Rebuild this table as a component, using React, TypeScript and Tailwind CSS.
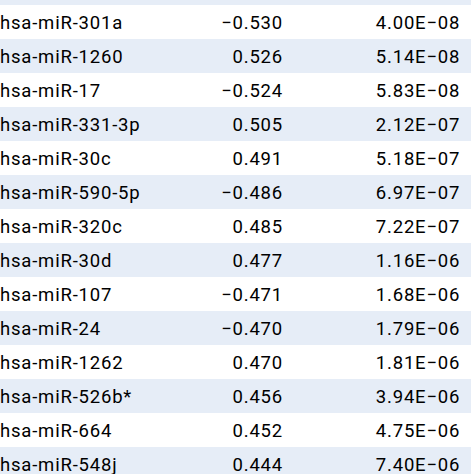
import React from "react";

const rows: [string, string, string][] = [
  ["hsa-miR-301a", "\u22120.530", "4.00E\u221208"],
  ["hsa-miR-1260", "0.526", "5.14E\u221208"],
  ["hsa-miR-17", "\u22120.524", "5.83E\u221208"],
  ["hsa-miR-331-3p", "0.505", "2.12E\u221207"],
  ["hsa-miR-30c", "0.491", "5.18E\u221207"],
  ["hsa-miR-590-5p", "\u22120.486", "6.97E\u221207"],
  ["hsa-miR-320c", "0.485", "7.22E\u221207"],
  ["hsa-miR-30d", "0.477", "1.16E\u221206"],
  ["hsa-miR-107", "\u22120.471", "1.68E\u221206"],
  ["hsa-miR-24", "\u22120.470", "1.79E\u221206"],
  ["hsa-miR-1262", "0.470", "1.81E\u221206"],
  ["hsa-miR-526b*", "0.456", "3.94E\u221206"],
  ["hsa-miR-664", "0.452", "4.75E\u221206"],
  ["hsa-miR-548j", "0.444", "7.40E\u221206"],
];

export default function App() {
  return (
    <div
      className="w-[474px] h-[474px] overflow-hidden bg-white text-[#000000]"
      style={{ fontFamily: "Roboto, 'Liberation Sans', sans-serif" }}
    >
      <div className="w-[471px] h-[5px] bg-[#e6edf7]" />
      {rows.map((r, i) => (
        <div
          key={r[0]}
          className={`w-[471px] h-[34px] pt-[2px] flex items-center text-[18.5px] tracking-[0.8px] leading-none ${
            i % 2 === 1 ? "bg-[#e6edf7]" : "bg-white"
          }`}
        >
          <span className="w-[200px]">{r[0]}</span>
          <span className="w-[83px] text-right mr-[-0.8px]">{r[1]}</span>
          <span className="w-[178px] text-right mr-[-0.8px]">{r[2]}</span>
        </div>
      ))}
    </div>
  );
}
